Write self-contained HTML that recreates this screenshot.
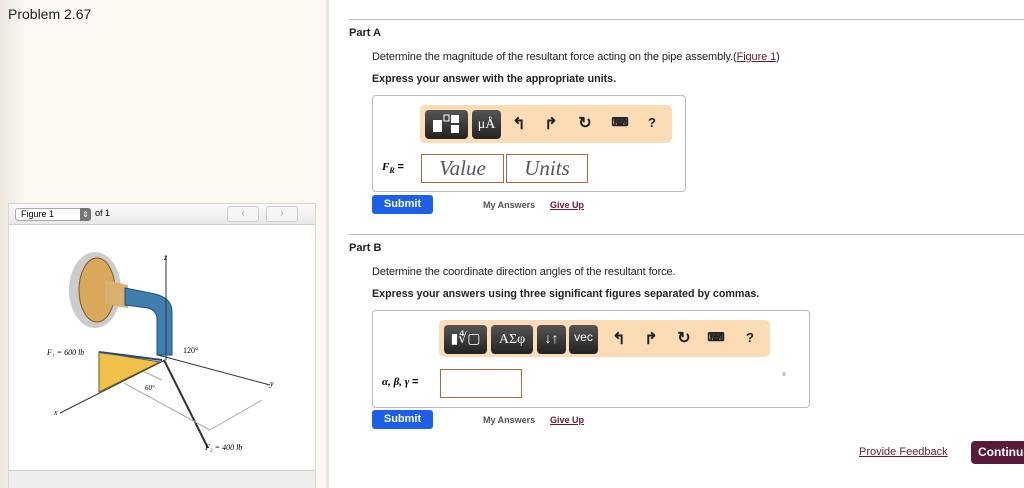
<!DOCTYPE html>
<html><head><style>
*{margin:0;padding:0;box-sizing:border-box}
body{width:1024px;height:488px;position:relative;overflow:hidden;background:#fff;font-family:"Liberation Sans",sans-serif;}
.a{position:absolute}
.left{left:0;top:0;width:326px;height:488px;background:linear-gradient(90deg,#ece6df 0,#fdf8f2 25px,#fdf8f2 100%)}
.sep{left:326px;top:0;width:3px;height:488px;background:#ebe6e0}
.t{font-size:10px;color:#222;white-space:nowrap}
.b{font-weight:bold}
.tb{background:#fcdcb5;border-radius:5px}
.btn{background:linear-gradient(#555,#222);border-radius:4px;color:#fff;text-align:center;font-family:"Liberation Serif",serif;font-size:14px}
.ic{color:#222;font-size:16px;font-weight:bold;text-align:center}
.inp{border:1px solid #b0683a;background:#fff;font-family:"Liberation Serif",serif;font-style:italic;font-size:21px;color:#556;text-align:center;line-height:26px}
.sub{background:#1c5fe8;color:#fff;font-weight:bold;font-size:11px;border-radius:3px;text-align:center;line-height:19px}
.ma{font-size:9px;font-weight:bold;color:#555}
.gu{font-size:9px;font-weight:bold;color:#6b1a2e;text-decoration:underline}
</style></head><body>
<div class="a left"></div><div class="a sep"></div>
<div class="a" style="left:8px;top:6px;font-size:14px;color:#222">Problem 2.67</div>

<div class="a" style="left:8px;top:203px;width:308px;height:285px;border:1px solid #ddd6cc;background:#fff"></div>
<div class="a" style="left:9px;top:204px;width:306px;height:21px;background:linear-gradient(#fafafa,#e8e8e8);border-bottom:1px solid #d8cfc3"></div>
<div class="a" style="left:15px;top:208px;width:76px;height:13px;border:1px solid #aaa;border-radius:3px;background:#fff;font-size:9px;padding-left:5px;line-height:11px">Figure 1</div>
<div class="a" style="left:80px;top:208px;width:11px;height:13px;background:#777;border-radius:0 3px 3px 0;color:#fff;font-size:8px;text-align:center;line-height:13px">⇕</div>
<div class="a" style="left:95px;top:208px;font-size:9px">of 1</div>
<div class="a" style="left:227px;top:206px;width:32px;height:16px;border:1px solid #ccc;border-radius:3px;background:#f6f6f6;color:#999;font-size:10px;text-align:center;line-height:14px">‹</div>
<div class="a" style="left:266px;top:206px;width:32px;height:16px;border:1px solid #ccc;border-radius:3px;background:#f6f6f6;color:#999;font-size:10px;text-align:center;line-height:14px">›</div>
<div class="a" style="left:9px;top:470px;width:306px;height:18px;background:#eee;border-top:1px solid #d8cfc3"></div>

<svg class="a" style="left:9px;top:226px" width="306" height="244" viewBox="9 226 306 244">
<ellipse cx="95" cy="290" rx="26" ry="38" fill="#ccc"/>
<ellipse cx="97" cy="290" rx="18" ry="32" fill="#d9a85a" stroke="#7a5a2a"/>
<path d="M105 280 L128 285 L128 308 L105 304 Z" fill="#d9b070"/>
<path d="M125 288 L155 294 Q172 298 172 312 L172 355 L157 355 L157 318 Q156 310 148 308 L125 305 Z" fill="#3e7fb0" stroke="#1d4d70"/>
<line x1="166" y1="255" x2="166" y2="360" stroke="#333"/>
<line x1="101" y1="352" x2="162" y2="380" stroke="#aaa"/>
<line x1="158" y1="355" x2="270" y2="385" stroke="#333"/>
<line x1="60" y1="413" x2="165" y2="360" stroke="#333"/>
<polygon points="99,352 99,392 160,362" fill="#f0c24a" stroke="#6a5a20"/>
<line x1="99" y1="352" x2="162" y2="360" stroke="#2a4a80" stroke-width="2"/>
<line x1="164" y1="360" x2="208" y2="448" stroke="#333" stroke-width="2"/>
<line x1="124" y1="383" x2="210" y2="430" stroke="#aaa"/>
<line x1="210" y1="430" x2="262" y2="400" stroke="#aaa"/>
<text x="47" y="355" font-family="Liberation Serif" font-size="8" font-style="italic">F₁ = 600 lb</text>
<text x="183" y="353" font-family="Liberation Serif" font-size="8">120°</text>
<text x="145" y="390" font-family="Liberation Serif" font-size="7" font-style="italic">60°</text>
<text x="270" y="386" font-family="Liberation Serif" font-size="8" font-style="italic">y</text>
<text x="164" y="260" font-family="Liberation Serif" font-size="8" font-style="italic">z</text>
<text x="54" y="415" font-family="Liberation Serif" font-size="8" font-style="italic">x</text>
<text x="205" y="450" font-family="Liberation Serif" font-size="8" font-style="italic">F₂ = 400 lb</text>
</svg>

<div class="a" style="left:349px;top:19px;width:675px;height:1px;background:#bbb"></div>
<div class="a t b" style="left:349px;top:27px;font-size:11px">Part A</div>
<div class="a t" style="left:372px;top:51px;font-size:11px;letter-spacing:-0.1px">Determine the magnitude of the resultant force acting on the pipe assembly.(<span style="color:#6b1a2e;text-decoration:underline">Figure 1</span>)</div>
<div class="a t b" style="left:372px;top:73px;font-size:10.7px">Express your answer with the appropriate units.</div>
<div class="a" style="left:372px;top:95px;width:314px;height:97px;border:1px solid #bbb;border-radius:4px"></div>
<div class="a tb" style="left:420px;top:105px;width:252px;height:38px"></div>
<div class="a btn" style="left:425px;top:110px;width:43px;height:29px"><svg width="43" height="29"><rect x="8" y="10" width="9" height="12" fill="#fff"/><rect x="19" y="5" width="5" height="6" fill="none" stroke="#fff"/><rect x="26" y="5" width="8" height="8" fill="#fff"/><rect x="26" y="15" width="8" height="8" fill="#fff"/></svg></div>
<div class="a btn" style="left:472px;top:110px;width:29px;height:29px;line-height:29px">μÅ</div>
<div class="a ic" style="left:511px;top:114px;width:16px">↰</div>
<div class="a ic" style="left:543px;top:114px;width:16px">↱</div>
<div class="a ic" style="left:577px;top:113px;width:16px">↻</div>
<div class="a ic" style="left:610px;top:115px;width:20px;font-size:12px">⌨</div>
<div class="a ic" style="left:645px;top:115px;width:14px;font-size:13px">?</div>
<div class="a" style="left:382px;top:161px;font-family:'Liberation Serif',serif;font-style:italic;font-weight:bold;font-size:11px">F<sub style="font-size:8px">R</sub> <span style="font-style:normal;font-family:'Liberation Sans'">=</span></div>
<div class="a inp" style="left:421px;top:154px;width:83px;height:29px">Value</div>
<div class="a inp" style="left:506px;top:154px;width:82px;height:29px">Units</div>
<div class="a sub" style="left:372px;top:195px;width:61px;height:19px">Submit</div>
<div class="a ma" style="left:483px;top:200px">My Answers</div>
<div class="a gu" style="left:550px;top:200px">Give Up</div>

<div class="a" style="left:349px;top:234px;width:675px;height:1px;background:#bbb"></div>
<div class="a t b" style="left:349px;top:242px;font-size:11px">Part B</div>
<div class="a t" style="left:372px;top:266px;font-size:11px;letter-spacing:-0.1px">Determine the coordinate direction angles of the resultant force.</div>
<div class="a t b" style="left:372px;top:288px;font-size:10.7px">Express your answers using three significant figures separated by commas.</div>
<div class="a" style="left:372px;top:310px;width:438px;height:98px;border:1px solid #bbb;border-radius:4px"></div>
<div class="a tb" style="left:439px;top:320px;width:331px;height:37px"></div>
<div class="a btn" style="left:444px;top:325px;width:43px;height:29px;line-height:29px">▮∜▢</div>
<div class="a btn" style="left:491px;top:325px;width:42px;height:29px;line-height:29px">ΑΣφ</div>
<div class="a btn" style="left:537px;top:325px;width:29px;height:29px;line-height:29px">↓↑</div>
<div class="a btn" style="left:569px;top:325px;width:29px;height:29px;line-height:24px;font-family:'Liberation Sans';font-size:12px">vec</div>
<div class="a ic" style="left:611px;top:329px;width:16px">↰</div>
<div class="a ic" style="left:643px;top:329px;width:16px">↱</div>
<div class="a ic" style="left:676px;top:328px;width:16px">↻</div>
<div class="a ic" style="left:706px;top:330px;width:20px;font-size:12px">⌨</div>
<div class="a ic" style="left:743px;top:330px;width:14px;font-size:13px">?</div>
<div class="a" style="left:382px;top:376px;font-family:'Liberation Serif',serif;font-style:italic;font-weight:bold;font-size:11px">α, β, γ <span style="font-style:normal;font-family:'Liberation Sans'">=</span></div>
<div class="a" style="left:440px;top:369px;width:82px;height:29px;border:1px solid #b0683a"></div>
<div class="a" style="left:782px;top:372px;font-size:10px;color:#555">°</div>
<div class="a sub" style="left:372px;top:410px;width:61px;height:19px">Submit</div>
<div class="a ma" style="left:483px;top:415px">My Answers</div>
<div class="a gu" style="left:550px;top:415px">Give Up</div>

<div class="a" style="left:859px;top:446px;font-size:11px;color:#6b1a2e;text-decoration:underline">Provide Feedback</div>
<div class="a" style="left:971px;top:441px;width:60px;height:23px;background:#5a1a3a;border-radius:4px;color:#fff;font-weight:bold;font-size:12px;line-height:23px;padding-left:7px">Continue</div>
</body></html>
